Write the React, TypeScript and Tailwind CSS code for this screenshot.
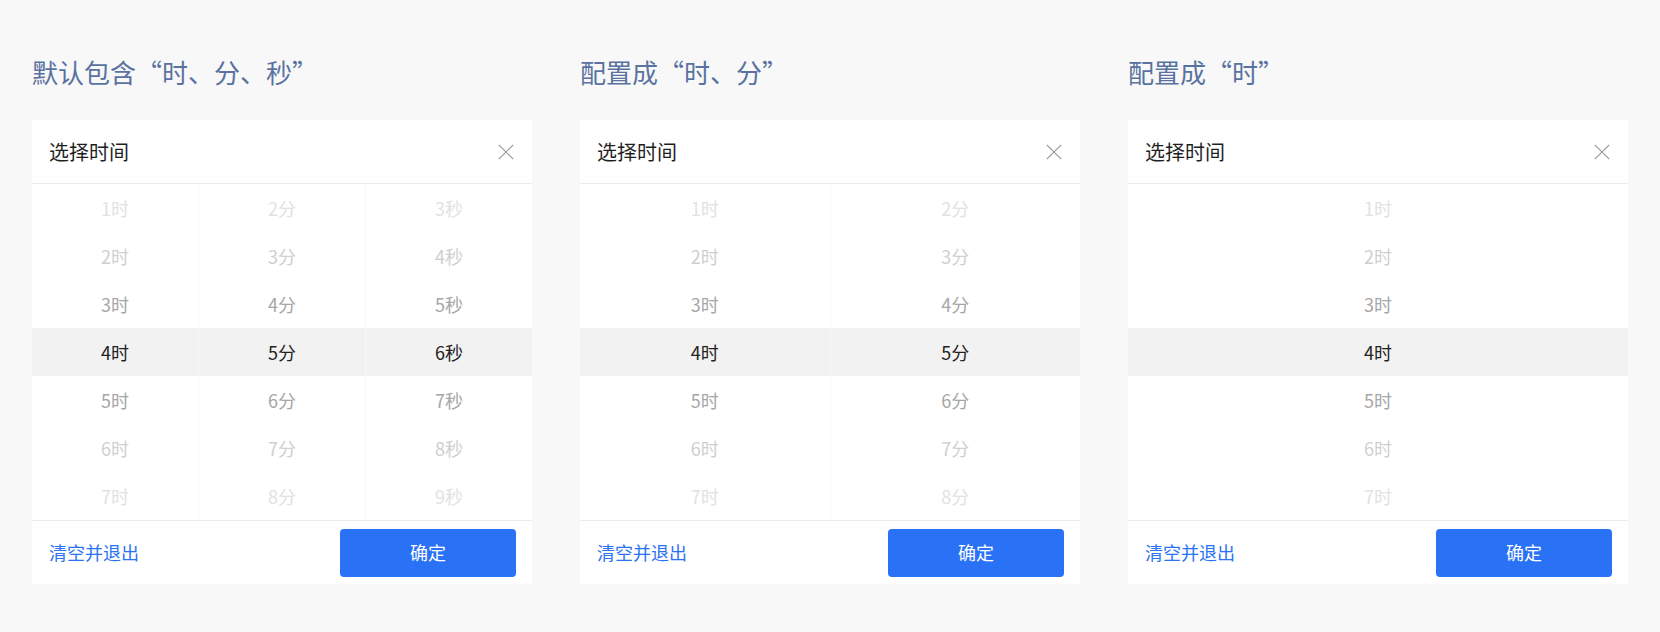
import React from "react";

type Column = { unit: string; start: number };

const rowColors = [
    "text-[#e2e2e2]",
    "text-[#cfcfcf]",
    "text-[#a6a6a6]",
    "text-[#222222]",
    "text-[#a6a6a6]",
    "text-[#cfcfcf]",
    "text-[#e2e2e2]",
];

const pickers: { title: string; columns: Column[] }[] = [
    {
        title: "默认包含“时、分、秒”",
        columns: [
            { unit: "时", start: 1 },
            { unit: "分", start: 2 },
            { unit: "秒", start: 3 },
        ],
    },
    {
        title: "配置成“时、分”",
        columns: [
            { unit: "时", start: 1 },
            { unit: "分", start: 2 },
        ],
    },
    {
        title: "配置成“时”",
        columns: [{ unit: "时", start: 1 }],
    },
];

function CloseIcon() {
    return (
        <svg width="16" height="16" viewBox="0 0 16 16" fill="none" className="text-[#999999]">
            <path d="M0.8 0.8L15.2 15.2M15.2 0.8L0.8 15.2" stroke="currentColor" strokeWidth="1.2" />
        </svg>
    );
}

function TimePicker({ columns }: { columns: Column[] }) {
    return (
        <div className="w-[500px] bg-white">
            {/* Header */}
            <div className="h-[64px] flex items-center justify-between pl-[17px] pr-[18px] border-b border-[#ebebeb]">
                <span className="text-[20px] text-[#1f1f1f]">选择时间</span>
                <CloseIcon />
            </div>

            {/* Wheels */}
            <div className="flex">
                {columns.map((col, ci) => (
                    <div
                        key={ci}
                        className={`flex-1 flex flex-col ${ci > 0 ? "border-l border-[#f8f8f8]" : ""}`}
                    >
                        {rowColors.map((color, ri) => (
                            <div
                                key={ri}
                                className={`h-[48px] flex items-center justify-center text-[18px] ${color} ${ri === 3 ? "bg-[#f2f2f2]" : ""}`}
                            >
                                {col.start + ri}
                                {col.unit}
                            </div>
                        ))}
                    </div>
                ))}
            </div>

            {/* Footer */}
            <div className="h-[64px] flex items-center justify-between pl-[17px] pr-4 border-t border-[#ebebeb]">
                <span className="text-[18px] text-[#2a72f5]">清空并退出</span>
                <button className="w-[176px] h-12 rounded-[4px] bg-[#2a72f5] text-white text-[18px]">
                    确定
                </button>
            </div>
        </div>
    );
}

export default function App() {
    return (
        <div
            className="w-full h-[632px] bg-[#f8f8f8] flex gap-12 px-8 pt-[53px]"
            style={{ fontFamily: '"Noto Sans CJK SC", "Noto Sans", sans-serif' }}
        >
            {pickers.map((p) => (
                <section key={p.title} className="w-[500px]">
                    <h2 className="text-[26px] leading-[38px] text-[#5a72a0] mb-[29px]">{p.title}</h2>
                    <TimePicker columns={p.columns} />
                </section>
            ))}
        </div>
    );
}
